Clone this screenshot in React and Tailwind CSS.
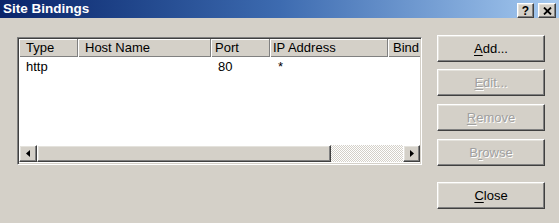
export default function App() {
  const raised =
    'border border-t-white border-l-white border-r-[#404040] border-b-[#404040] shadow-[inset_-1px_-1px_0_#808080,inset_1px_1px_0_#e4e2dc]'

  const Btn = ({ label, u, disabled, className = '' }) => {
    const i = label.indexOf(u)
    return (
      <div
        className={`w-[108px] h-[27px] bg-[#d4d0c8] ${raised} flex items-center justify-center text-[13px] ${className} ${
          disabled ? 'text-[#a0a0a0] [text-shadow:1px_1px_0_#fff]' : 'text-black'
        }`}
      >
        <span>
          {label.slice(0, i)}
          <span className="underline underline-offset-2">{u}</span>
          {label.slice(i + 1)}
        </span>
      </div>
    )
  }

  const head = 'h-[18px] bg-[#d4d0c8] border-r border-r-[#808080] shadow-[inset_1px_1px_0_#fff,inset_0_-1px_0_#808080] flex items-center text-[13px] shrink-0'

  return (
    <div className="w-[559px] h-[223px] bg-[#d4d0c8] flex flex-col overflow-hidden font-['Liberation_Sans',Arial,sans-serif] text-black">
      {/* title bar */}
      <div className="h-[18px] flex items-center bg-gradient-to-r from-[#0a246a] via-[#3d6bb0] to-[#a6caf0] pl-[3px] pr-[3px]">
        <span className="text-white font-bold text-[13.5px] leading-none">Site Bindings</span>
        <div className="ml-auto flex gap-[4px] mt-[3px]">
          <div className={`w-[17px] h-[15px] bg-[#d4d0c8] ${raised} flex items-center justify-center text-[12px] font-bold leading-none`}>?</div>
          <div className={`w-[18px] h-[15px] bg-[#d4d0c8] ${raised} flex items-center justify-center`}>
            <svg width="9" height="8" viewBox="0 0 9 8">
              <path d="M1 0.5 L8 7.5 M8 0.5 L1 7.5" stroke="#000" strokeWidth="1.8" />
            </svg>
          </div>
        </div>
      </div>

      {/* body */}
      <div className="flex pl-[17px] pt-[17px]">
        {/* list view */}
        <div className="mt-[2px] w-[405px] h-[128px] bg-white border border-t-[#808080] border-l-[#808080] border-r-white border-b-white shadow-[inset_1px_1px_0_#404040,inset_-1px_-1px_0_#d4d0c8] p-[1px] pb-[2px] flex flex-col">
          <div className="flex overflow-hidden">
            <div className={`${head} w-[59px] pl-[7px]`}>Type</div>
            <div className={`${head} w-[133px] pl-[7px]`}>Host Name</div>
            <div className={`${head} w-[59px] pl-[4px]`}>Port</div>
            <div className={`${head} w-[118px] pl-[3px]`}>IP Address</div>
            <div className={`${head} w-[33px] pl-[5px] border-r-0`}>Bind</div>
          </div>
          <div className="flex h-[18px] items-center text-[13px] mt-[1px]">
            <div className="w-[59px] pl-[7px]">http</div>
            <div className="w-[133px]" />
            <div className="w-[59px] pl-[7px]">80</div>
            <div className="w-[118px] pl-[8px]">*</div>
          </div>
          <div className="flex-1" />
          {/* horizontal scrollbar */}
          <div className="h-[17px] flex">
            <div className={`w-[18px] h-full bg-[#d4d0c8] ${raised} flex items-center justify-center`}>
              <svg width="4" height="7" viewBox="0 0 4 7"><path d="M4 0 L0 3.5 L4 7 Z" fill="#000" /></svg>
            </div>
            <div className={`w-[294px] h-full bg-[#d4d0c8] ${raised}`} />
            <div className="flex-1 h-full bg-[repeating-conic-gradient(#ffffff_0_25%,#d4d0c8_0_50%)] bg-[length:2px_2px]" />
            <div className={`w-[17px] h-full bg-[#d4d0c8] ${raised} flex items-center justify-center`}>
              <svg width="4" height="7" viewBox="0 0 4 7"><path d="M0 0 L4 3.5 L0 7 Z" fill="#000" /></svg>
            </div>
          </div>
        </div>

        {/* buttons */}
        <div className="ml-[15px] flex flex-col">
          <Btn label="Add..." u="A" />
          <Btn label="Edit..." u="E" disabled className="mt-[7px]" />
          <Btn label="Remove" u="R" disabled className="mt-[8px]" />
          <Btn label="Browse" u="r" disabled className="mt-[8px]" />
          <Btn label="Close" u="C" className="mt-[16px] h-[26px]" />
        </div>
      </div>
    </div>
  )
}
